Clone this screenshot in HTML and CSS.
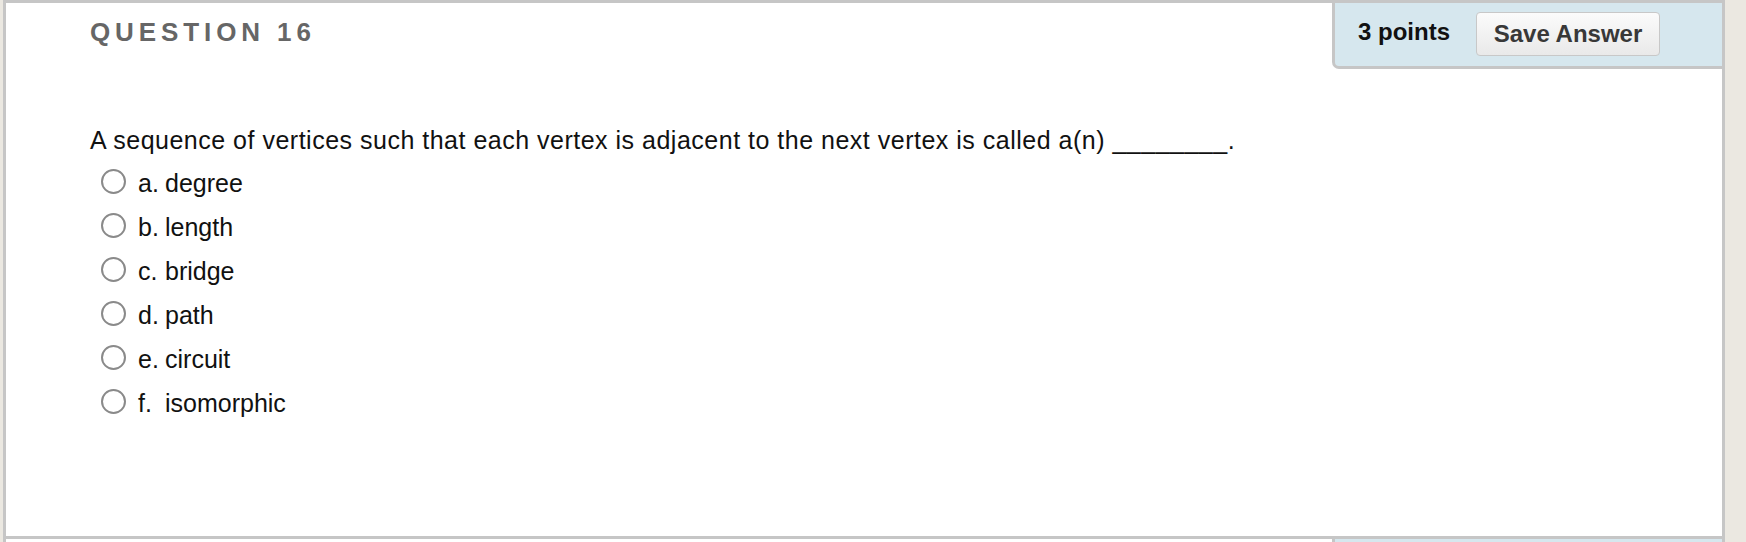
FILE: index.html
```html
<!DOCTYPE html>
<html lang="en">
<head>
<meta charset="utf-8">
<title>Question 16</title>
<link rel="stylesheet" href="styles.css">
</head>
<body>
<div class="wrap">
  <div class="question">
    <div class="q-head">
      <h3 class="q-title">QUESTION 16</h3>
      <div class="q-points">
        <span class="points">3 points</span>
        <button class="save" type="button">Save Answer</button>
      </div>
    </div>
    <div class="q-body">
      <p class="q-text">A sequence of vertices such that each vertex is adjacent to the next vertex is called a(n) ________.</p>
      <ul class="options">
        <li class="option"><span class="radio"></span><span class="letter">a.</span><span class="answer">degree</span></li>
        <li class="option"><span class="radio"></span><span class="letter">b.</span><span class="answer">length</span></li>
        <li class="option"><span class="radio"></span><span class="letter">c.</span><span class="answer">bridge</span></li>
        <li class="option"><span class="radio"></span><span class="letter">d.</span><span class="answer">path</span></li>
        <li class="option"><span class="radio"></span><span class="letter">e.</span><span class="answer">circuit</span></li>
        <li class="option"><span class="radio"></span><span class="letter">f.</span><span class="answer">isomorphic</span></li>
      </ul>
    </div>
  </div>
  <div class="question next">
    <div class="q-head">
      <div class="q-points empty" aria-hidden="true"></div>
    </div>
  </div>
</div>
</body>
</html>
```
FILE: styles.css
```css
html, body {
  margin: 0;
  padding: 0;
}
body {
  background: #ebe8e1;
  font-family: "Liberation Sans", Arial, Helvetica, sans-serif;
  color: #141414;
  overflow: hidden;
}
.wrap {
  margin: 0 21px 0 3px;
  background: #ffffff;
  border-left: 3px solid #c6c6c6;
  border-right: 3px solid #c6c6c6;
}
.question {
  border-top: 3px solid #c6c6c6;
  min-height: 533px;
}
.question.next {
  min-height: 66px;
}
.q-head {
  display: flex;
  justify-content: space-between;
  align-items: flex-start;
}
.q-title {
  margin: 14px 0 0 84px;
  font-size: 26px;
  line-height: 30px;
  font-weight: bold;
  letter-spacing: 4.9px;
  color: #666666;
}
.q-points {
  box-sizing: border-box;
  width: 390px;
  height: 66px;
  display: flex;
  align-items: center;
  align-self: flex-start;
  gap: 26px;
  padding: 0 0 2px 23px;
  background: #d6e7ee;
  border-left: 3px solid #c6c6c6;
  border-bottom: 3px solid #c6c6c6;
  border-bottom-left-radius: 7px;
}
.q-points.empty {
  margin-left: auto;
}
.points {
  font-size: 24px;
  font-weight: bold;
  color: #111111;
  line-height: 28px;
  margin-top: -4px;
}
.save {
  box-sizing: border-box;
  width: 184px;
  height: 44px;
  margin: 0;
  padding: 0;
  font-family: "Liberation Sans", Arial, Helvetica, sans-serif;
  font-size: 24px;
  font-weight: bold;
  color: #383838;
  background: linear-gradient(#fbfbfb, #e9e9e9);
  border: 1px solid #c8c8c8;
  border-radius: 4px;
}
.q-body {
  padding: 56px 0 0 84px;
}
.q-text {
  margin: 0;
  font-size: 25px;
  line-height: 30px;
  letter-spacing: 0.5px;
  color: #111111;
}
.options {
  list-style: none;
  margin: 6px 0 0 0;
  padding: 0 0 0 11px;
}
.option {
  display: flex;
  align-items: center;
  height: 44px;
  font-size: 25px;
  color: #111111;
}
.radio {
  box-sizing: border-box;
  width: 25px;
  height: 25px;
  border: 2px solid #8a8a8a;
  border-radius: 50%;
  background: #ffffff;
  margin-top: -4px;
  flex: none;
}
.letter {
  display: inline-block;
  width: 27px;
  margin-left: 12px;
}
.answer {
  display: inline-block;
}
```
